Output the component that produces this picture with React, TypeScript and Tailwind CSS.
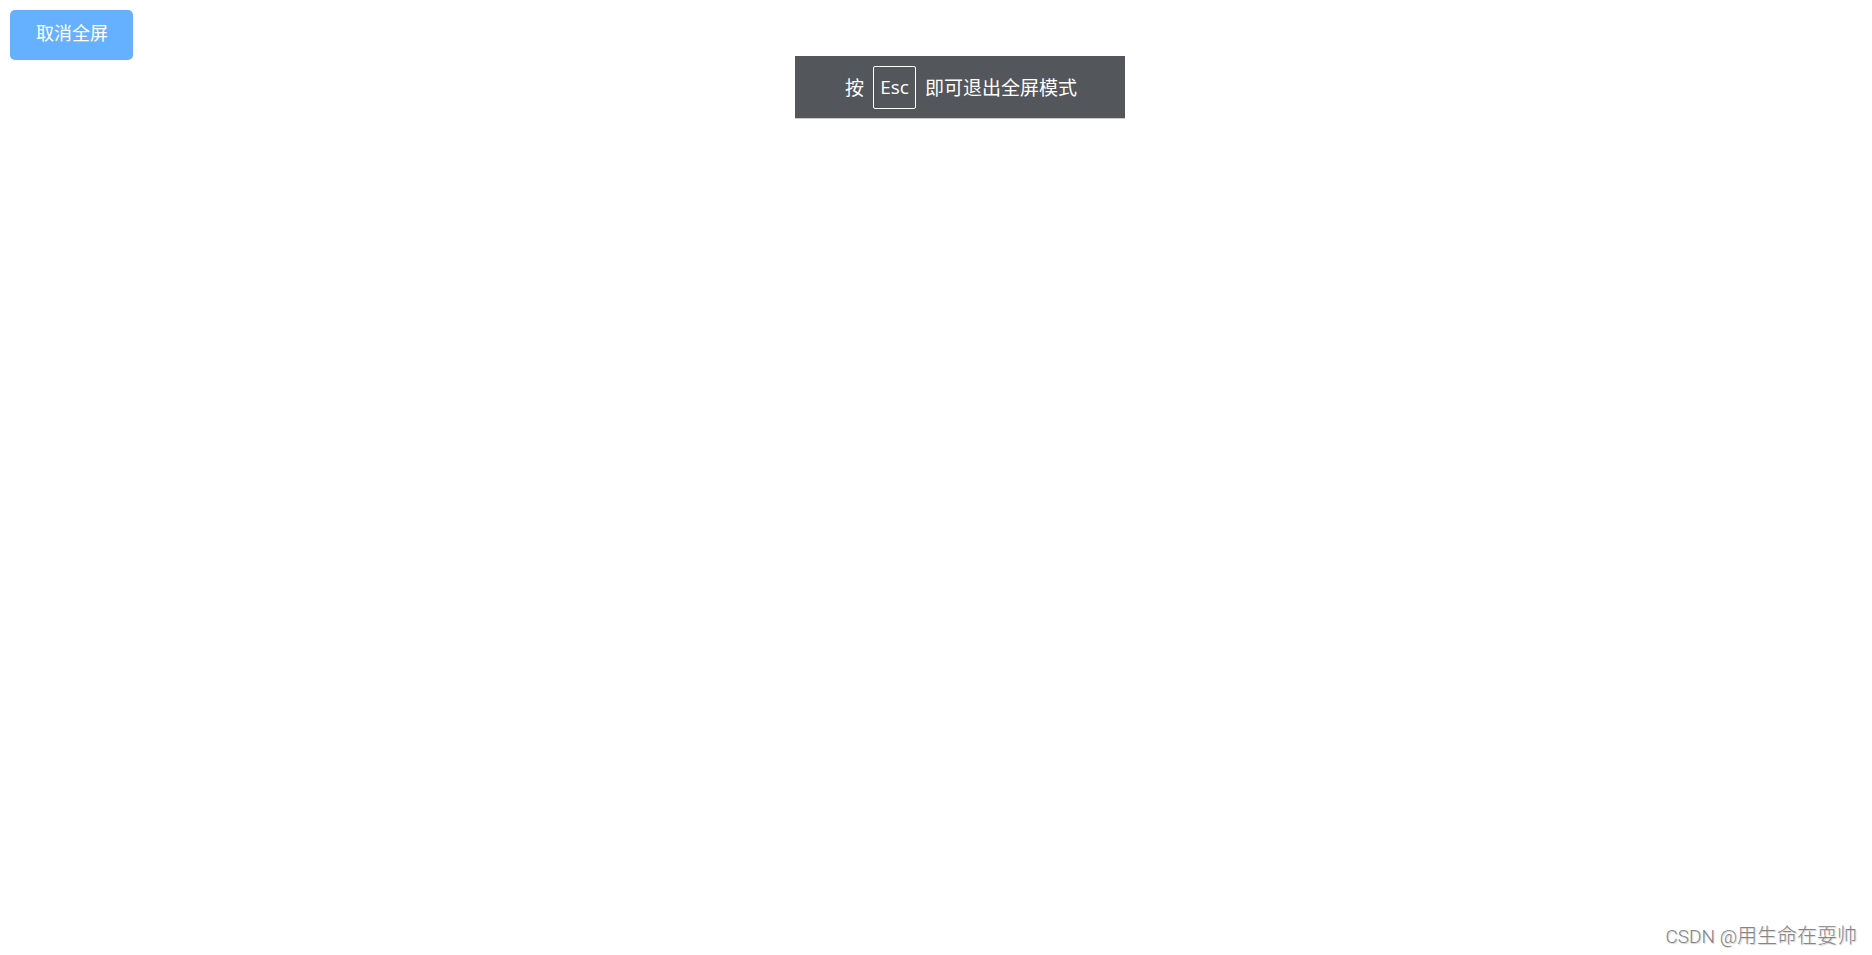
export default function App() {
  return (
    <div className="flex min-h-screen flex-col justify-between bg-white font-['Noto_Sans_CJK_SC',sans-serif]">
      <header className="p-[10px]">
        <button
          className="h-[50px] rounded-[5px] bg-[#66b1ff] pr-[25px] pb-[6px] pl-[26px] text-[18px] leading-6 text-white"
          type="button"
        >
          取消全屏
        </button>
      </header>
      <FullscreenHint />
      <footer className="px-[15px] pb-[2px] text-right font-[Roboto,'Noto_Sans_CJK_SC',sans-serif] text-[20px] leading-8 font-light text-[#858585] [text-shadow:1px_1px_1px_#d0d0d0]">
        <span className="text-[19px]">CSDN @</span>用生命在耍帅
      </footer>
    </div>
  );
}

function FullscreenHint() {
  return (
    <div className="pointer-events-none absolute inset-x-0 top-14 flex justify-center pl-12">
      <p className="flex h-[63px] w-[330px] items-center justify-center gap-[9px] border-b border-[#c8c9ca] bg-[#53565a] pl-0.5 text-[19px] leading-7 text-white">
        <span>按</span>
        <kbd className="flex h-[43px] w-[43px] items-center justify-center rounded-xs border border-white font-['Open_Sans',sans-serif] text-[19px] font-medium">
          Esc
        </kbd>
        <span>即可退出全屏模式</span>
      </p>
    </div>
  );
}
